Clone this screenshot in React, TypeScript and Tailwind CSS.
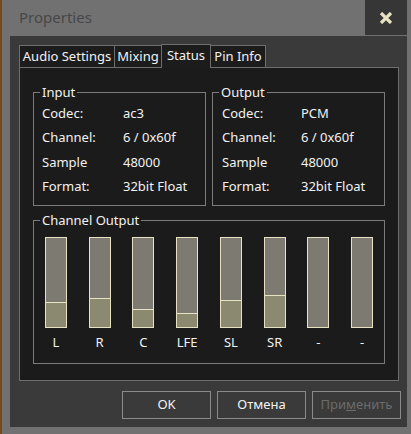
import React from 'react';

const font = { fontFamily: '"Noto Sans", "Open Sans", sans-serif' };

type Row = { label: string; value: string };

const inputRows: Row[] = [
  { label: 'Codec:', value: 'ac3' },
  { label: 'Channel:', value: '6 / 0x60f' },
  { label: 'Sample', value: '48000' },
  { label: 'Format:', value: '32bit Float' },
];

const outputRows: Row[] = [
  { label: 'Codec:', value: 'PCM' },
  { label: 'Channel:', value: '6 / 0x60f' },
  { label: 'Sample', value: '48000' },
  { label: 'Format:', value: '32bit Float' },
];

const channels = [
  { name: 'L', level: 25 },
  { name: 'R', level: 29 },
  { name: 'C', level: 18 },
  { name: 'LFE', level: 14 },
  { name: 'SL', level: 27 },
  { name: 'SR', level: 32 },
  { name: '-', level: 0 },
  { name: '-', level: 0 },
];

const InfoBox: React.FC<{ title: string; rows: Row[]; indent: string; labelW: string }> = ({
  title,
  rows,
  indent,
  labelW,
}) => (
  <fieldset className="border border-[#7c7c7c] pb-[6px]">
    <legend className="ml-[6px] px-[2px] h-[18px] leading-[18px] text-[13px]">{title}</legend>
    <div className={indent}>
      {rows.map((r) => (
        <div key={r.label} className="flex h-[24.5px] items-center text-[13px]">
          <span className={labelW}>{r.label}</span>
          <span>{r.value}</span>
        </div>
      ))}
    </div>
  </fieldset>
);

const tabs = [
  { name: 'Audio Settings', w: 'w-[96px]' },
  { name: 'Mixing', w: 'w-[48px]' },
  { name: 'Status', w: 'w-[50px]' },
  { name: 'Pin Info', w: 'w-[56px]' },
];

export default function App() {
  return (
    <div
      className="w-[411px] h-[434px] bg-[#717171] border-l-2 border-[#7a4818] flex flex-col text-[#f2f2f2]"
      style={font}
    >
      {/* title bar */}
      <div className="h-[36px] flex shrink-0">
        <div className="flex-1 pl-[17px] pt-[6px] text-[15px] text-[#474747]">Properties</div>
        <div className="w-[42px] h-[35px] bg-[#363636] flex items-center justify-center mr-[4px]">
          <svg width="14" height="12" viewBox="0 0 14 12">
            <path d="M2 1 L12 11 M12 1 L2 11" stroke="#e8e2c2" strokeWidth="3.2" />
          </svg>
        </div>
      </div>

      {/* dialog body */}
      <div className="flex-1 ml-[8px] mr-[4px] mb-[7px] bg-[#3a3a3a] pl-[9px] pt-[8px] flex flex-col">
        {/* tabs */}
        <div className="flex items-end h-[23px] relative z-10">
          {tabs.map((t, i) => {
            const active = t.name === 'Status';
            return (
              <div
                key={t.name}
                className={
                  'border border-[#6e6e6e] bg-[#1c1c1c] text-[13px] flex items-center justify-center ' +
                  t.w +
                  (i > 0 ? ' -ml-px' : '') +
                  (active ? ' h-[24px] border-b-0 mb-[-1px] pb-[1px] relative z-10' : ' h-[22px] border-b-0')
                }
              >
                {t.name}
              </div>
            );
          })}
        </div>

        {/* panel */}
        <div className="w-[380px] h-[314px] border border-[#6e6e6e] bg-[#1b1b1b] pt-[15px] pl-[13px] pr-[13px]">
          <div className="grid grid-cols-2 gap-[6px]">
            <InfoBox title="Input" rows={inputRows} indent="pl-[8px]" labelW="w-[81px]" />
            <InfoBox title="Output" rows={outputRows} indent="pl-[9px]" labelW="w-[79px]" />
          </div>

          <fieldset className="mt-[5px] border border-[#7c7c7c] pb-[12px]">
            <legend className="ml-[6px] px-[2px] h-[18px] leading-[18px] text-[13px]">Channel Output</legend>
            <div className="grid grid-cols-8 pt-[8px]">
              {channels.map((c, i) => (
                <div key={i} className="flex flex-col items-center">
                  <div className="w-[22px] h-[91px] border border-[#e6e2c3] bg-[#7c7a71] flex flex-col justify-end">
                    {c.level > 0 && (
                      <div className="border-t border-[#e6e2c3] bg-[#8b8970]" style={{ height: c.level }} />
                    )}
                  </div>
                  <div className="mt-[5px] h-[18px] leading-[18px] text-[13px]">{c.name}</div>
                </div>
              ))}
            </div>
          </fieldset>
        </div>

        {/* buttons */}
        <div className="flex justify-end gap-[6px] mt-[10px] pr-[6px]">
          <button className="w-[89px] h-[28px] border border-[#8a8a8a] text-[13px]">OK</button>
          <button className="w-[89px] h-[28px] border border-[#8a8a8a] text-[13px]">Отмена</button>
          <button className="w-[89px] h-[28px] border border-[#8a8a8a] text-[13px] text-[#6c6c6c]">
            При<span className="underline">м</span>енить
          </button>
        </div>
      </div>
    </div>
  );
}
